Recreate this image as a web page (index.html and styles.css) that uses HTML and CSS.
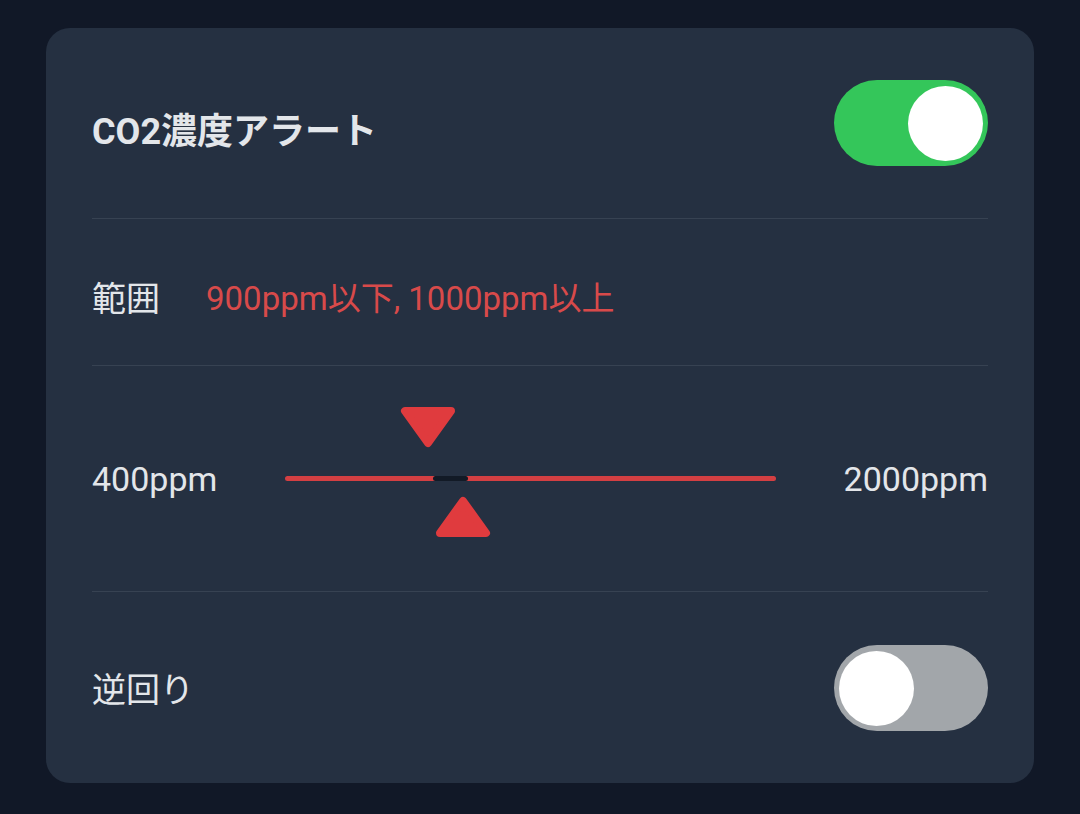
FILE: index.html
```html
<!DOCTYPE html>
<html lang="ja">
<head>
    <meta charset="UTF-8">
    <meta name="viewport" content="width=device-width, initial-scale=1.0">
    <title>CO2濃度アラート</title>
    <link rel="stylesheet" href="styles.css">
</head>
<body>

    <div class="card">
        <div class="row row-title">
            <div class="title">CO2濃度アラート</div>
            <div class="toggle on"><div class="knob"></div></div>
        </div>

        <div class="row row-range">
            <div class="label">範囲</div>
            <div class="range-text">900ppm以下, 1000ppm以上</div>
        </div>

        <div class="row row-slider">
            <div class="label">400ppm</div>
            <div class="slider">
                <div class="track"></div>
                <div class="gap"></div>
                <svg class="thumb thumb-low" width="58" height="42" viewBox="0 0 58 42">
                    <polygon points="6,5 52,5 29,37" />
                </svg>
                <svg class="thumb thumb-high" width="58" height="42" viewBox="0 0 58 42">
                    <polygon points="29,5 52,37 6,37" />
                </svg>
            </div>
            <div class="label">2000ppm</div>
        </div>

        <div class="row row-reverse">
            <div class="label">逆回り</div>
            <div class="toggle off"><div class="knob"></div></div>
        </div>
    </div>

</body>
</html>
```

FILE: styles.css
```css
* {
    box-sizing: border-box;
    margin: 0;
    padding: 0;
}

body {
    background: #111827;
    font-family: Roboto, "Noto Sans CJK JP", sans-serif;
    color: #e3e6ea;
    padding: 28px 46px 0;
    height: 100vh;
}

.card {
    background: #253041;
    border-radius: 24px;
    padding: 10px 46px 0;
}

.row {
    display: flex;
    align-items: center;
    justify-content: space-between;
    border-bottom: 1px solid #374252;
}

.row:last-child {
    border-bottom: none;
}

.row-title { height: 181px; }
.row-range { height: 147px; justify-content: flex-start; padding-top: 8px; }
.row-slider { height: 226px; }
.row-reverse { height: 191px; }

.title {
    font-size: 36px;
    font-weight: 700;
}

.label {
    font-size: 34px;
}

.range-text {
    font-size: 33px;
    color: #d84a4a;
    margin-left: 46px;
}

/* Toggle switch */
.toggle {
    width: 154px;
    height: 86px;
    border-radius: 43px;
    position: relative;
}

.toggle.on {
    background: #34c65a;
    margin-bottom: 10px;
}

.toggle.off { background: #a2a6aa; }

.knob {
    position: absolute;
    top: 6px;
    width: 75px;
    height: 75px;
    border-radius: 50%;
    background: #fff;
}

.toggle.on .knob { right: 5px; }
.toggle.off .knob { left: 5px; }

/* Range slider */
.slider {
    flex: 1;
    margin: 0 68px;
    height: 5px;
    position: relative;
}

.track {
    height: 5px;
    border-radius: 3px;
    background: #d43f42;
}

.gap {
    position: absolute;
    top: 0;
    left: 148px;
    width: 35px;
    height: 5px;
    border-radius: 3px;
    background: #121a26;
}

.thumb {
    position: absolute;
}

.thumb polygon {
    fill: #e03b3e;
    stroke: #e03b3e;
    stroke-width: 8;
    stroke-linejoin: round;
}

.thumb-low {
    left: 114px;
    top: -70px;
}

.thumb-high {
    left: 149px;
    top: 20px;
}
```
